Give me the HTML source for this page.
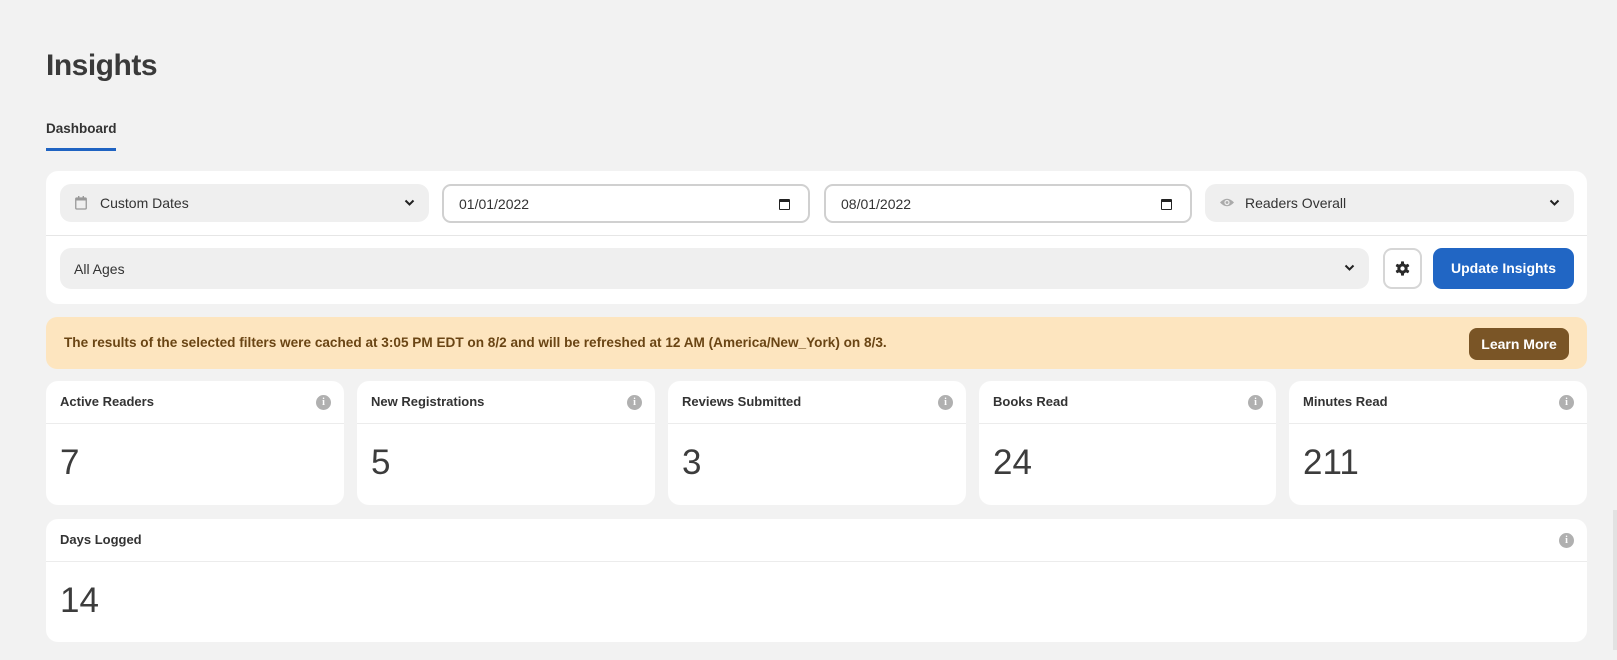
<!DOCTYPE html>
<html><head><style>
*{box-sizing:border-box;margin:0;padding:0}
body{width:1617px;height:660px;background:#f2f2f2;font-family:"Liberation Sans",sans-serif;color:#333;position:relative;overflow:hidden}
.a{position:absolute}
h1{position:absolute;left:46px;top:49px;font-size:30px;font-weight:bold;color:#3a3a3a;letter-spacing:-0.5px}
.tab{left:46px;top:121px;font-size:13.5px;font-weight:bold;color:#333}
.tabline{left:46px;top:148px;width:70px;height:3px;background:#1f63c2}
.card{position:absolute;background:#fff;border-radius:12px}
.sel{position:absolute;background:#efefef;border-radius:11px;height:38px;font-size:14px;color:#333;display:flex;align-items:center}
.inp{position:absolute;background:#fff;border:2px solid #d0d0d0;border-radius:9px;height:39px;font-size:14px;color:#333;display:flex;align-items:center;padding-left:15px}
.chev{position:absolute;right:14px;top:15px}
.cal{position:absolute;right:18px;top:13px;width:11px;height:11px;border:1.6px solid #222;border-top-width:3px;border-radius:1px}
.stat .t{position:absolute;left:14px;top:13px;font-size:13px;font-weight:bold;color:#333}
.stat .i{position:absolute;right:13px;top:14px;width:15px;height:15px;border-radius:50%;background:#b0b0b0;color:#fff;font-size:10px;font-weight:bold;text-align:center;line-height:15px;font-family:"Liberation Serif",serif}
.stat .l{position:absolute;left:0;right:0;top:42px;height:1px;background:#ececec}
.stat .n{position:absolute;left:14px;top:62px;font-size:35px;font-weight:300;color:#3c3c3c}
</style></head><body>
<h1>Insights</h1>
<div class="a tab">Dashboard</div>
<div class="a tabline"></div>

<div class="card" style="left:46px;top:171px;width:1541px;height:133px">
 <div class="a" style="left:0;right:0;top:64px;height:1px;background:#e6e6e6"></div>
</div>
<div class="sel" style="left:60px;top:184px;width:369px">
 <svg class="a" style="left:15px;top:12px" width="12" height="14" viewBox="0 0 12 14"><rect x="0.75" y="2" width="10.5" height="11" rx="1" fill="none" stroke="#999" stroke-width="1.3"/><rect x="0.75" y="2" width="10.5" height="2.5" fill="#999"/><rect x="3" y="0" width="1.4" height="3" fill="#999"/><rect x="7.6" y="0" width="1.4" height="3" fill="#999"/></svg>
 <span style="margin-left:40px">Custom Dates</span>
 <svg class="chev" width="11" height="8" viewBox="0 0 11 8"><path d="M1.5 1.5 L5.5 5.5 L9.5 1.5" fill="none" stroke="#222" stroke-width="2"/></svg>
</div>
<div class="inp" style="left:442px;top:184px;width:368px">01/01/2022<div class="cal"></div></div>
<div class="inp" style="left:824px;top:184px;width:368px">08/01/2022<div class="cal"></div></div>
<div class="sel" style="left:1205px;top:184px;width:369px">
 <svg class="a" style="left:14px;top:13px" width="16" height="11" viewBox="0 0 16 11"><path d="M1 5.5 Q8 -2 15 5.5 Q8 13 1 5.5Z" fill="#aaa"/><circle cx="8" cy="5.5" r="2.6" fill="#efefef"/><circle cx="8" cy="5.5" r="1.4" fill="#aaa"/></svg>
 <span style="margin-left:40px">Readers Overall</span>
 <svg class="chev" width="11" height="8" viewBox="0 0 11 8"><path d="M1.5 1.5 L5.5 5.5 L9.5 1.5" fill="none" stroke="#222" stroke-width="2"/></svg>
</div>
<div class="sel" style="left:60px;top:248px;width:1309px;height:41px"><span style="margin-left:14px">All Ages</span>
 <svg class="chev" style="top:16px" width="11" height="8" viewBox="0 0 11 8"><path d="M1.5 1.5 L5.5 5.5 L9.5 1.5" fill="none" stroke="#222" stroke-width="2"/></svg>
</div>
<div class="a" style="left:1383px;top:248px;width:39px;height:41px;border:2px solid #d6d6d6;border-radius:9px;background:#fff">
 <svg class="a" style="left:10px;top:11px" width="15" height="15" viewBox="0 0 14 14"><g fill="#2a2a2a"><circle cx="7" cy="7" r="4.8"/><rect x="5.6" y="0.3" width="2.8" height="13.4" rx="0.6"/><rect x="5.6" y="0.3" width="2.8" height="13.4" rx="0.6" transform="rotate(60 7 7)"/><rect x="5.6" y="0.3" width="2.8" height="13.4" rx="0.6" transform="rotate(120 7 7)"/></g><circle cx="7" cy="7" r="2" fill="#fff"/></svg>
</div>
<div class="a" style="left:1433px;top:248px;width:141px;height:41px;background:#2166c4;border-radius:9px;color:#fff;font-size:14px;font-weight:bold;text-align:center;line-height:41px">Update Insights</div>

<div class="a" style="left:46px;top:317px;width:1541px;height:52px;background:#fde5bf;border-radius:11px">
 <div class="a" style="left:18px;top:18px;font-size:13.6px;font-weight:bold;color:#6a4514">The results of the selected filters were cached at 3:05 PM EDT on 8/2 and will be refreshed at 12 AM (America/New_York) on 8/3.</div>
 <div class="a" style="left:1423px;top:11px;width:100px;height:32px;background:#7a5526;border-radius:8px;color:#fff;font-size:14px;font-weight:bold;text-align:center;line-height:32px">Learn More</div>
</div>

<div class="card stat" style="left:46px;top:381px;width:298px;height:124px"><div class="t">Active Readers</div><div class="i">i</div><div class="l"></div><div class="n">7</div></div>
<div class="card stat" style="left:357px;top:381px;width:298px;height:124px"><div class="t">New Registrations</div><div class="i">i</div><div class="l"></div><div class="n">5</div></div>
<div class="card stat" style="left:668px;top:381px;width:298px;height:124px"><div class="t">Reviews Submitted</div><div class="i">i</div><div class="l"></div><div class="n">3</div></div>
<div class="card stat" style="left:979px;top:381px;width:297px;height:124px"><div class="t">Books Read</div><div class="i">i</div><div class="l"></div><div class="n">24</div></div>
<div class="card stat" style="left:1289px;top:381px;width:298px;height:124px"><div class="t">Minutes Read</div><div class="i">i</div><div class="l"></div><div class="n">211</div></div>
<div class="card stat" style="left:46px;top:519px;width:1541px;height:123px"><div class="t">Days Logged</div><div class="i">i</div><div class="l"></div><div class="n">14</div></div>
<div class="a" style="left:1613px;top:510px;width:4px;height:140px;background:#e2e2e2"></div>
</body></html>
